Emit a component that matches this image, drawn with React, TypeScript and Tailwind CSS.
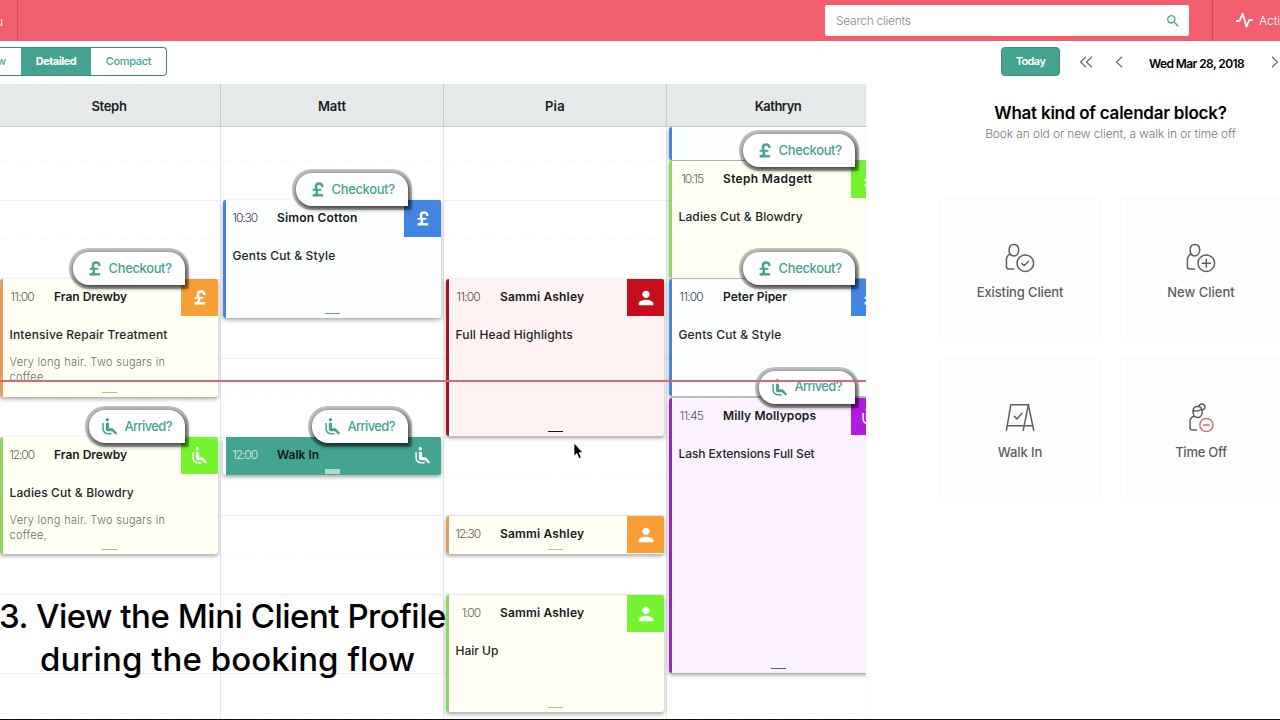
import type { ReactNode } from "react";
import { MdPerson, MdSearch } from "react-icons/md";

type IconKind = "pound" | "seat" | "person";
type Tone = "blue" | "green" | "orange" | "red" | "purple" | "teal";

const tones: Record<Tone, { edge: string; card: string; icon: string; grip: string; time: string }> = {
  blue: { edge: "border-[#4785d6]", card: "bg-[#fdfeff]", icon: "bg-[#4187e2]", grip: "bg-[#6f8fbd]", time: "text-[#3c4358]" },
  green: { edge: "border-[#8cd867]", card: "bg-[#fffff4]", icon: "bg-[#77f430]", grip: "bg-[#a3c67f]", time: "text-[#5d6654]" },
  orange: { edge: "border-[#dda062]", card: "bg-[#fffff4]", icon: "bg-[#f99f38]", grip: "bg-[#cfb692]", time: "text-[#5f5a50]" },
  red: { edge: "border-[#9c1823]", card: "bg-[#fff2f2]", icon: "bg-[#c50d1b]", grip: "bg-[#2a0a0a]", time: "text-[#5f4c4f]" },
  purple: { edge: "border-[#8f2cb0]", card: "bg-[#fdf2ff]", icon: "bg-[#b01be0]", grip: "bg-[#6c5577]", time: "text-[#5d4a66]" },
  teal: { edge: "border-white", card: "bg-[#45a391]", icon: "bg-[#45a391]", grip: "bg-[#b4dad2]", time: "text-[#d8ebe7]" },
};

function Pound() {
  return (
    <svg width="12" height="15" viewBox="0 0 12 15" fill="none" stroke="currentColor" strokeWidth="2.5">
      <path d="M10.4 4.9C10.4 2.6 9.2 1.4 7.1 1.4 5 1.4 3.9 2.7 3.9 4.5 3.9 6.8 5 8.3 5 10.2 5 11.8 4 13 2.2 13.2" />
      <path d="M.6 13.3H11.2" strokeWidth="2.4" />
      <path d="M.6 7.8H9.4" strokeWidth="1.9" />
    </svg>
  );
}

function Seat() {
  return (
    <svg width="16" height="17" viewBox="0 0 16 17" fill="none" stroke="currentColor">
      <circle cx="5.3" cy="1.7" r="1.7" fill="currentColor" stroke="none" />
      <path d="M1.1 5V10.9A4.9 4.9 0 0 0 6 15.8H9.6" strokeWidth="1.5" />
      <path d="M3.8 5.9C3.8 4.4 7.1 4.4 7.1 5.9V10.3H10.2C10.8 10.3 11.2 10.5 11.5 10.9L15.2 15.3 13.4 16.4 10 13.2H6.2C4.8 13.2 3.8 12.3 3.8 10.9Z" fill="currentColor" stroke="none" />
    </svg>
  );
}

function StatusIcon({ kind }: { kind: IconKind }) {
  if (kind === "pound") return <Pound />;
  if (kind === "seat") return <Seat />;
  return <MdPerson className="h-[22px] w-[22px]" />;
}

function Pill({ kind }: { kind: "pound" | "seat" }) {
  return (
    <div
      className={`absolute right-[33px] top-[-27px] z-10 flex h-[33px] items-center rounded-[16px] rounded-br-none bg-white text-[13px] font-medium text-[#45a391] shadow-[0_0_0_4px_rgba(0,0,0,0.24),1px_2px_4px_1px_rgba(0,0,0,0.65)] ${
        kind === "pound" ? "w-[112px] gap-[8px] pl-[15.5px] tracking-[-0.36px]" : "w-[96px] gap-[6.5px] pl-[13px] tracking-[-0.66px]"
      }`}
    >
      <StatusIcon kind={kind} />
      <span>{kind === "pound" ? "Checkout?" : "Arrived?"}</span>
    </div>
  );
}

type ApptProps = {
  tone: Tone;
  size: string;
  time?: string;
  name?: ReactNode;
  service?: ReactNode;
  note?: string;
  icon?: IconKind;
  pill?: "pound" | "seat";
};

function Appt({ tone, size, time, name, service, note, icon, pill }: ApptProps) {
  const t = tones[tone];
  return (
    <div className={`relative ml-[2px] w-[218px] shrink-0 rounded-[3px] border-l-[3px] shadow-[0_2px_4px_rgba(0,0,0,0.35)] ${t.edge} ${t.card} ${size}`}>
      {time && (
        <div className="flex h-[37px] items-start">
          <span className={`w-[31px] pt-[9px] text-right text-[12px] font-light leading-[18px] ${time.includes("11:") ? "tracking-[-0.8px]" : "tracking-[-1.1px]"} ${t.time}`}>{time}</span>
          <span className="grow pl-[20px] pt-[9px] text-[12px] font-semibold leading-[18px] text-[#151a1c]">{name}</span>
          <span className={`flex h-[37px] w-[37px] items-center justify-center rounded-tr-[2px] text-white ${t.icon}`}>
            {icon && <StatusIcon kind={icon} />}
          </span>
        </div>
      )}
      {service && <div className="flex h-[38px] items-center pl-[6.5px] text-[12px] font-medium text-[#222628]">{service}</div>}
      {note && (
        <div className="flex flex-col pl-[6.5px] pt-px text-[11px] font-light leading-[14.5px] tracking-[0.28px] text-[#6b6e64]">
          <span>Very long hair. Two sugars in</span>
          <span>{note}</span>
        </div>
      )}
      {time && <span className={`absolute left-[98.5px] w-[15px] ${tone === "teal" ? "bottom-px h-[5px]" : "bottom-[4px] h-px"} ${t.grip}`} />}
      {pill && <Pill kind={pill} />}
    </div>
  );
}

function Column({ title, children }: { title: ReactNode; children: ReactNode }) {
  return (
    <div className="flex w-[223px] shrink-0 flex-col">
      <div className="flex h-[43px] items-center justify-center border-b border-r border-[#c6caca] bg-[#e6e9e9] pt-[3px] text-[13px] font-semibold text-[#1a1f22]">
        {title}
      </div>
      <div className="flex h-[592px] flex-col border-r border-[#e4e6e7]">{children}</div>
    </div>
  );
}

function GridLines() {
  return (
    <div className="absolute inset-x-0 top-[38px]">
      {Array.from({ length: 8 }, (_, i) => (
        <div key={i}>
          <div className="h-[39.4px] border-b border-dashed border-[#f6f7f7]" />
          <div className="h-[39.5px] border-b border-[#eef0f0]" />
        </div>
      ))}
    </div>
  );
}

function Tile({ label, icon }: { label: ReactNode; icon: ReactNode }) {
  return (
    <div className="flex h-[142px] w-[162px] flex-col items-center rounded-[3px] border border-[#f9f9f9] bg-[#fefefe] pt-[44px] text-[13px] font-medium text-[#5b5f60]">
      {icon}
      <span className="mt-[9px] leading-[20px]">{label}</span>
    </div>
  );
}

const line = { fill: "none", stroke: "#5d6061", strokeWidth: 1.5, strokeLinecap: "round", strokeLinejoin: "round" } as const;

function ClientIcon({ mark }: { mark: string }) {
  return (
    <svg width="30" height="30" viewBox="0 0 30 30" {...line}>
      <path d="M8.9 1.5C12 1.5 13.7 4 13.7 7.1S12 12.9 8.9 12.9 4.1 10.3 4.1 7.1 5.8 1.5 8.9 1.5Z" />
      <path d="M4.7 11.2C2.3 12.6 1.4 14.4 1.4 17V23.5C1.4 25 2.5 26 4 26H8.6" />
      <circle cx="20.3" cy="20.2" r="8.3" />
      <path d={mark} />
    </svg>
  );
}

function BoardIcon() {
  return (
    <svg width="30" height="30" viewBox="0 0 30 30" {...line}>
      <path d="M1.4 27.4 5.8 1.8H23.4L28.7 27.4" />
      <path d="M23.4 1.8 18.2 27.4M2.2 22.8H27.6M9.3 13.3 12 15.9 17 10.3" />
    </svg>
  );
}

function TimeOffIcon() {
  return (
    <svg width="30" height="30" viewBox="0 0 30 30" {...line}>
      <path d="M11.6 3.6C14.6 3.6 16.2 5.6 16.2 8.6S14.6 14.6 11.6 14.6 7 11.6 7 8.6 8.6 3.6 11.6 3.6Z" />
      <path d="M7.2 7.6C10 8.4 13.6 8 15.4 6.2" />
      <path d="M12.8 3.4C13.2 1.7 14.6.9 16 .9 17.8.9 19 2.2 19 4S17.8 6.8 16.2 7" />
      <path d="M7.8 13.2C5.2 14.2 4 15.8 4 18.4V24.6C4 26.2 4.8 26.9 6.4 26.9H10.4" />
      <circle cx="20.4" cy="22" r="6.6" stroke="#dc6b7f" />
      <path d="M17.5 22H23.3" stroke="#dc6b7f" />
    </svg>
  );
}

function Chevron({ d, w }: { d: string; w: number }) {
  return (
    <svg width={w} height="12" viewBox={`0 0 ${w} 12`} fill="none" stroke="#6d7173" strokeWidth="1.3">
      <path d={d} />
    </svg>
  );
}

export default function App() {
  return (
    <div className="relative flex h-[720px] w-[1280px] flex-col overflow-hidden bg-white font-['Inter','Liberation_Sans',sans-serif]">
      <header className="flex h-[41px] shrink-0 bg-[#f15e6e] text-white">
        <div className="flex w-[18px] items-center overflow-hidden border-r border-[#cf4b5c] text-[12px] font-light">
          <span className="-ml-[4px] pt-[3px]">u</span>
        </div>
        <div className="ml-[807px] mt-[5px] flex h-[31px] w-[364px] items-center justify-between rounded-[2px] bg-white pl-[11px] pr-[8px]">
          <span className="text-[12px] font-light tracking-[-0.27px] text-[#858a8c]">Search clients</span>
          <MdSearch className="h-[16px] w-[16px] text-[#45a391]" />
        </div>
        <div className="ml-[23px] flex w-[68px] items-center overflow-hidden whitespace-nowrap border-l border-[#cf4b5c] pl-[22px]">
          <svg width="19" height="17" viewBox="0 0 19 17" fill="none" stroke="white" strokeWidth="1.8" strokeLinejoin="round" className="shrink-0">
            <path d="M1 9H4.6L7.6 1.6 11.6 14.8 14 8.2H18" />
          </svg>
          <span className="ml-[5px] text-[12px] font-light">Acti</span>
        </div>
      </header>

      <div className="flex h-[43px] shrink-0 items-start pt-[6px] text-[11px] text-[#45a391]">
        <div className="flex h-[29px] w-[167px] overflow-hidden rounded-r-[4px] border border-l-0 border-[#4d8378] leading-[26px]">
          <span className="w-[21px] font-medium">
            <span className="-ml-[3px]">w</span>
          </span>
          <span className="w-[70px] bg-[#45a391] text-center font-bold tracking-[-0.5px] text-white">Detailed</span>
          <span className="grow text-center font-medium tracking-[-0.35px]">Compact</span>
        </div>
        <div className="ml-[834px] h-[29px] w-[59px] rounded-[4px] border border-[#4d8378] bg-[#45a391] text-center font-semibold leading-[26px] tracking-[-0.6px] text-white">
          Today
        </div>
        <div className="ml-[19px] flex h-[30px] items-center">
          <Chevron w={14} d="M7 .7 1.5 6 7 11.3M13 .7 7.5 6 13 11.3" />
          <div className="w-[22px]" />
          <Chevron w={8} d="M7 .7 1.5 6 7 11.3" />
          <span className="ml-[26px] w-[97px] whitespace-nowrap pt-[3px] text-[12px] font-semibold tracking-[-0.6px] text-black">Wed Mar 28, 2018</span>
          <div className="w-[25px]" />
          <Chevron w={8} d="M1 .7 6.5 6 1 11.3" />
        </div>
      </div>

      <main className="flex h-[635px] shrink-0">
        <section className="relative w-[865.5px] shrink-0 overflow-hidden">
          <GridLines />
          <div className="relative -ml-[2px] flex">
            <Column title={<span className="tracking-[-0.3px]">Steph</span>}>
              <Appt tone="orange" size="mt-[152px] h-[118px]" time="11:00" name="Fran Drewby" service={<span className="tracking-[0.17px]">Intensive Repair Treatment</span>} note="coffee." icon="pound" pill="pound" />
              <Appt tone="green" size="mt-[40px] h-[117px]" time="12:00" name="Fran Drewby" service={<span className="tracking-[0.12px]">Ladies Cut &amp; Blowdry</span>} note="coffee," icon="seat" pill="seat" />
            </Column>
            <Column title="Matt">
              <Appt tone="blue" size="mt-[73px] h-[118px]" time="10:30" name={<span className="tracking-[0.19px]">Simon Cotton</span>} service={<span className="tracking-[0.15px]">Gents Cut &amp; Style</span>} icon="pound" pill="pound" />
              <Appt tone="teal" size="mt-[119px] h-[38px]" time="12:00" name="Walk In" icon="seat" pill="seat" />
            </Column>
            <Column title={<span className="tracking-[0.3px]">Pia</span>}>
              <Appt tone="red" size="mt-[152px] h-[157px]" time="11:00" name={<span className="tracking-[0.17px]">Sammi Ashley</span>} service={<span className="tracking-[0.15px]">Full Head Highlights</span>} icon="person" />
              <Appt tone="orange" size="mt-[80px] h-[38px]" time="12:30" name={<span className="tracking-[0.17px]">Sammi Ashley</span>} icon="person" />
              <Appt tone="green" size="mt-[41px] h-[117px]" time="1:00" name={<span className="tracking-[0.17px]">Sammi Ashley</span>} service="Hair Up" icon="person" />
            </Column>
            <Column title={<span className="tracking-[-0.5px]">Kathryn</span>}>
              <Appt tone="blue" size="h-[33px]" />
              <Appt tone="green" size="mt-px h-[117px] w-[219px]" time="10:15" name={<span className="tracking-[0.33px]">Steph Madgett</span>} service={<span className="tracking-[0.12px]">Ladies Cut &amp; Blowdry</span>} icon="pound" pill="pound" />
              <Appt tone="blue" size="mt-px h-[117px] w-[219px]" time="11:00" name="Peter Piper" service={<span className="tracking-[0.15px]">Gents Cut &amp; Style</span>} icon="pound" pill="pound" />
              <Appt tone="purple" size="mt-[1.5px] h-[275px] w-[219px]" time="11:45" name={<span className="tracking-[0.12px]">Milly Mollypops</span>} service={<span className="tracking-[-0.1px]">Lash Extensions Full Set</span>} icon="seat" pill="seat" />
            </Column>
          </div>
          <div className="absolute inset-x-0 top-[296px] z-20 h-[2px] bg-[#d4697a]" />
          <div className="absolute left-[-1px] top-[511px] z-20 flex w-[460px] flex-col whitespace-nowrap text-[33px] font-medium leading-[43px] text-black">
            <span className="tracking-[-0.48px]">3. View the Mini Client Profile</span>
            <span className="ml-[41px] tracking-[0.06px]">during the booking flow</span>
          </div>
        </section>

        <aside className="ml-[0.5px] flex w-[488px] shrink-0 flex-col items-center border-l border-[#f7f8f8] pt-[17px]">
          <h1 className="text-[17px] font-semibold leading-[24px] tracking-[-0.23px] text-black">What kind of calendar block?</h1>
          <p className="text-[12px] font-light leading-[18px] tracking-[-0.13px] text-[#75797a]">Book an old or new client, a walk in or time off</p>
          <div className="mt-[55px] grid grid-cols-2 gap-x-[19px] gap-y-[18px]">
            <Tile label={<span className="tracking-[-0.12px]">Existing Client</span>} icon={<ClientIcon mark="M16.9 20.6 19.3 22.6 23.4 18.4" />} />
            <Tile label="New Client" icon={<ClientIcon mark="M20.3 16.2V24.2M16.3 20.2H24.3" />} />
            <Tile label={<span className="tracking-[-0.1px]">Walk In</span>} icon={<BoardIcon />} />
            <Tile label={<span className="tracking-[-0.25px]">Time Off</span>} icon={<TimeOffIcon />} />
          </div>
        </aside>
      </main>
      <div className="h-px w-full shrink-0 bg-[#111111]" />

      <svg className="absolute left-[573px] top-[442px] z-30" width="11" height="18" viewBox="0 0 11 18">
        <path d="M1 1V14.2L3.9 11.5 6 16.6 8.3 15.6 6.2 10.7H10Z" fill="#000" stroke="#fff" strokeWidth=".8" />
      </svg>
    </div>
  );
}
